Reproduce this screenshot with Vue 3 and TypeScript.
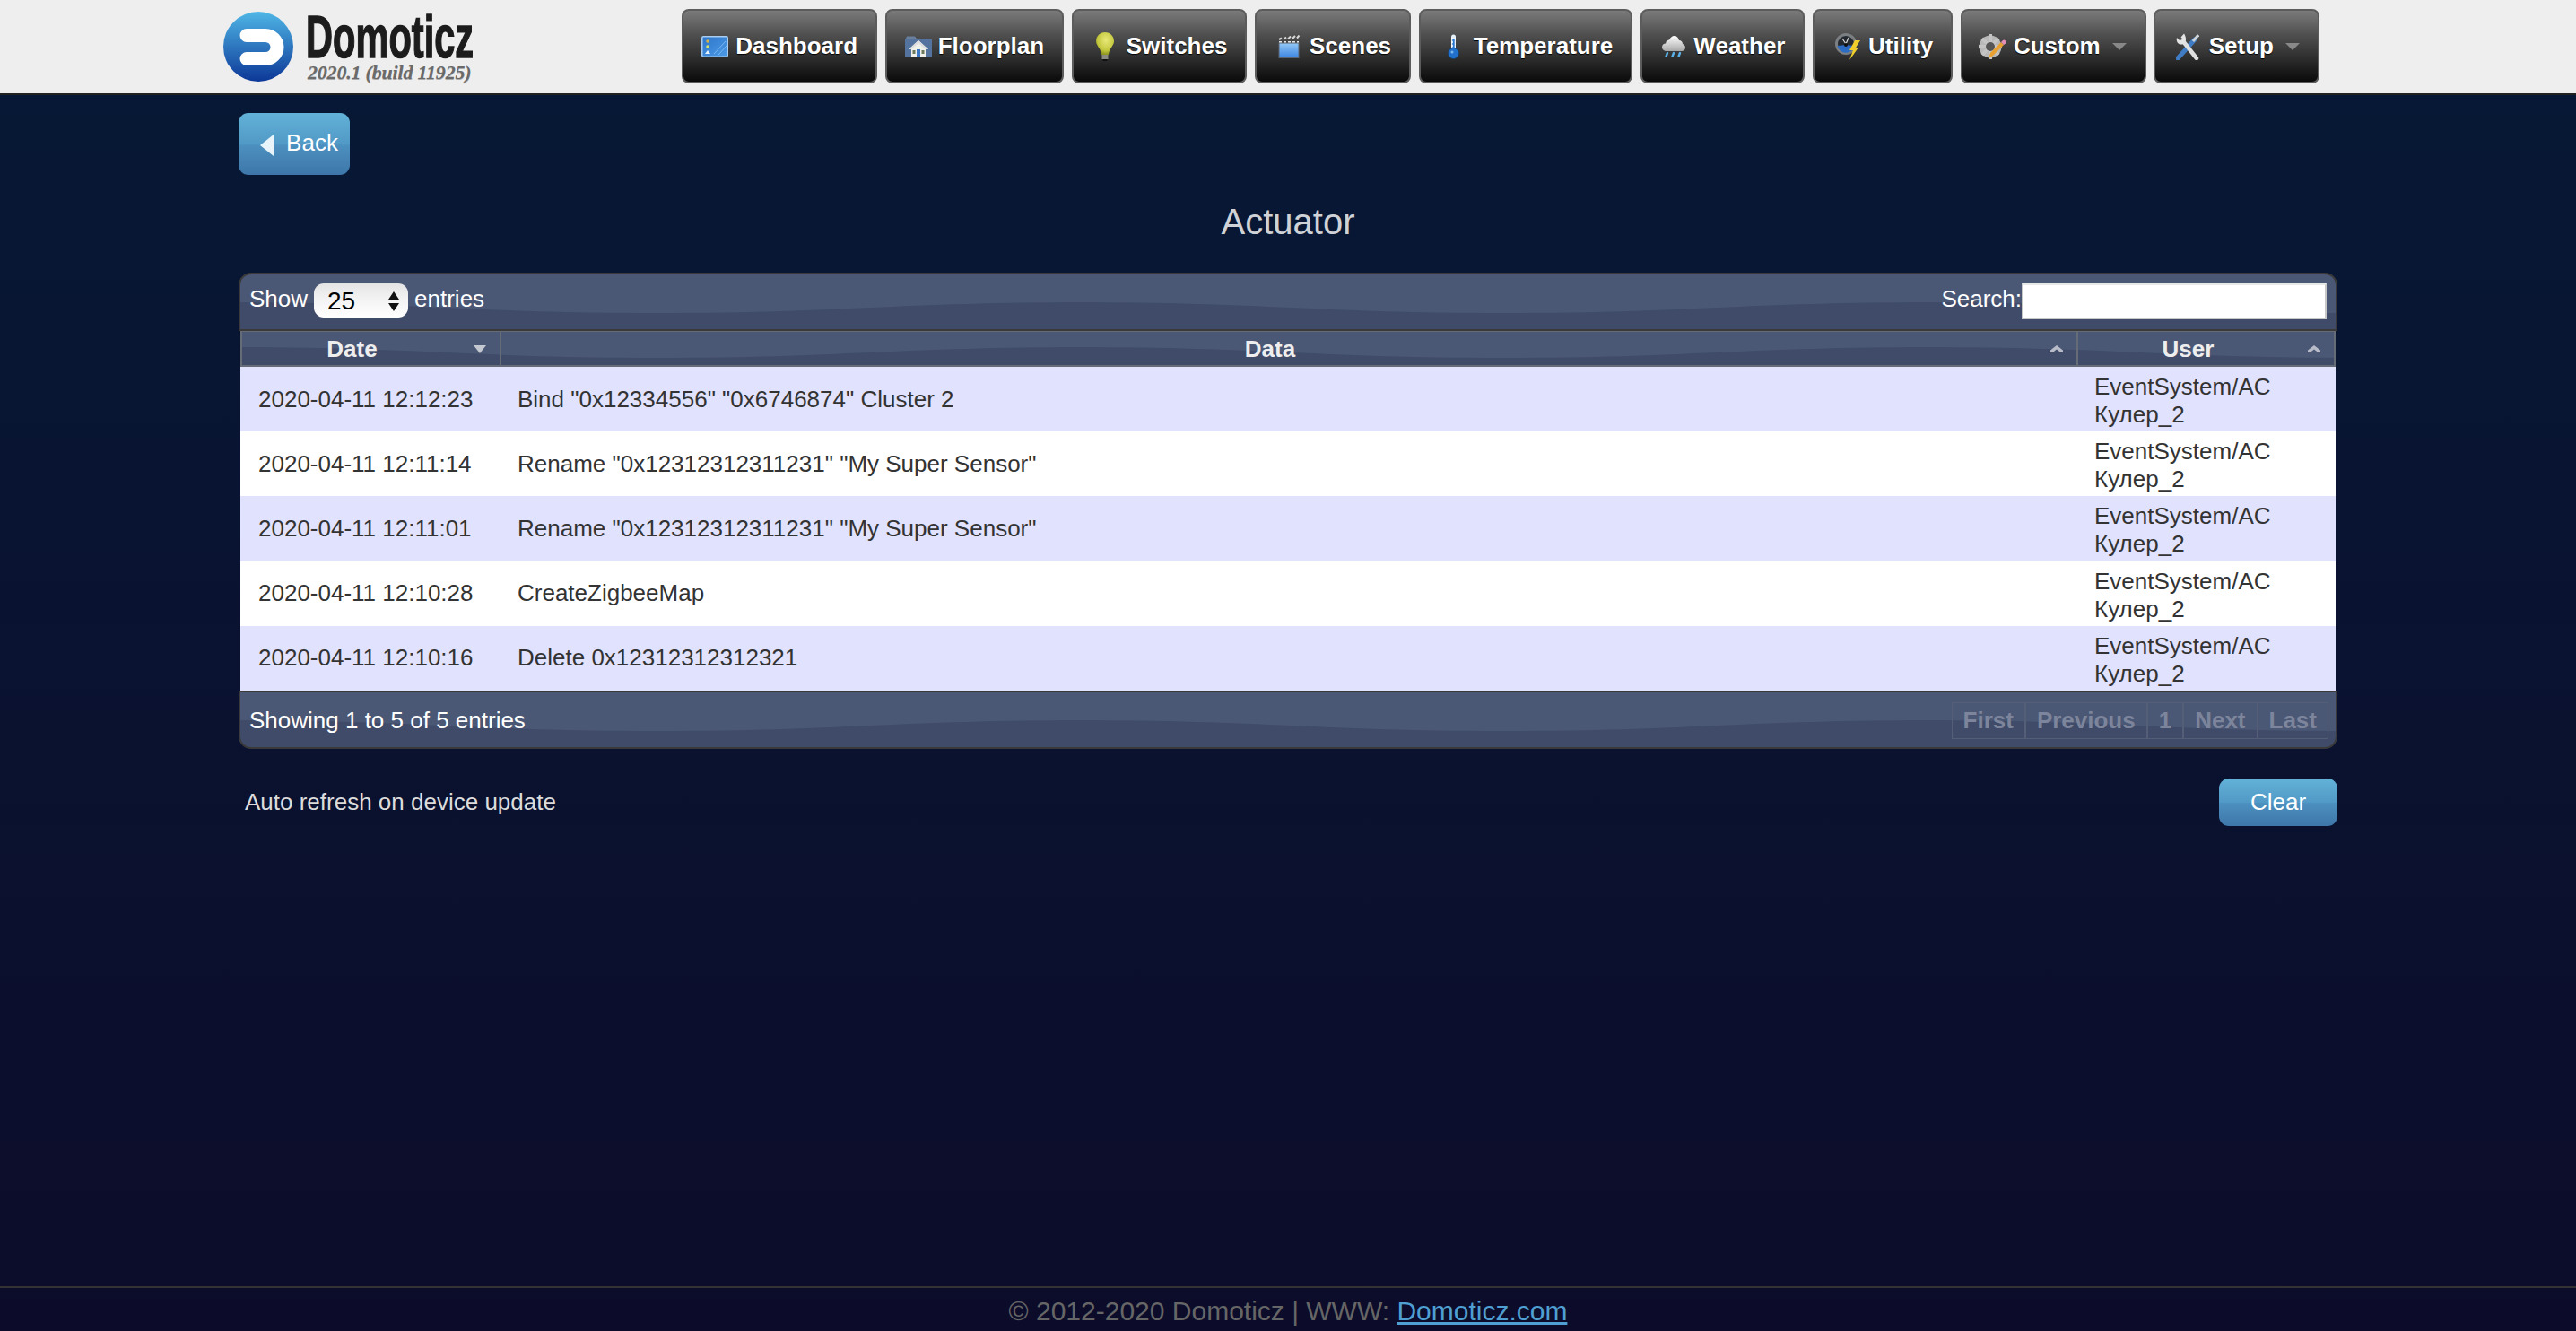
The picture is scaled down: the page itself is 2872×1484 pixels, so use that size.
<script setup lang="ts">
interface NavItem { label: string; icon: string; caret?: boolean }
interface LogRow { date: string; data: string }

const nav: NavItem[] = [
  { label: 'Dashboard', icon: 'dashboard' },
  { label: 'Floorplan', icon: 'floorplan' },
  { label: 'Switches', icon: 'switches' },
  { label: 'Scenes', icon: 'scenes' },
  { label: 'Temperature', icon: 'temperature' },
  { label: 'Weather', icon: 'weather' },
  { label: 'Utility', icon: 'utility' },
  { label: 'Custom', icon: 'custom', caret: true },
  { label: 'Setup', icon: 'setup', caret: true },
]

const rows: LogRow[] = [
  { date: '2020-04-11 12:12:23', data: 'Bind "0x12334556" "0x6746874" Cluster 2' },
  { date: '2020-04-11 12:11:14', data: 'Rename "0x12312312311231" "My Super Sensor"' },
  { date: '2020-04-11 12:11:01', data: 'Rename "0x12312312311231" "My Super Sensor"' },
  { date: '2020-04-11 12:10:28', data: 'CreateZigbeeMap' },
  { date: '2020-04-11 12:10:16', data: 'Delete 0x12312312312321' },
]

const pages = ['First', 'Previous', '1', 'Next', 'Last']
</script>

<template>
  <div class="page">
    <header class="topbar">
      <a class="brand">
        <svg class="brand-mark" width="78" height="78" viewBox="0 0 78 78">
          <defs>
            <linearGradient id="markFill" x1="0" y1="0" x2="0" y2="1">
              <stop offset="0" stop-color="#4fb6e6" />
              <stop offset="1" stop-color="#0c3797" />
            </linearGradient>
          </defs>
          <circle cx="39" cy="39" r="39" fill="url(#markFill)" />
          <path d="M26 26.5H47A13 13 0 0 1 47 52.500H26" fill="none" stroke="#fff" stroke-width="15" stroke-linecap="round" />
        </svg>
        <div class="brand-text">
          <span class="brand-name">Domoticz</span>
          <span class="brand-version">2020.1 (build 11925)</span>
        </div>
      </a>
      <nav class="nav">
        <a v-for="item in nav" :key="item.label" class="nav-btn">
          <svg v-if="item.icon === 'dashboard'" class="i-dashboard" width="30" height="24" viewBox="0 0 30 24">
            <defs>
              <linearGradient id="dashFill" x1="0" y1="0" x2="1" y2="1">
                <stop offset="0" stop-color="#2f74c8" />
                <stop offset="1" stop-color="#4b9be8" />
              </linearGradient>
            </defs>
            <rect x="0.750" y="0.750" width="28.500" height="22.500" rx="1.500" fill="url(#dashFill)" stroke="#a8cdf0" stroke-width="1.500" />
            <path d="M14 20L27 6M19 21L28 11" stroke="#7fb8ee" stroke-width="1" fill="none" />
            <circle cx="7" cy="6" r="1.800" fill="#d8b04a" />
            <circle cx="7" cy="12" r="1.800" fill="#d9e36a" />
            <path d="M4 20L7 16L10 20Z" fill="#e8f2fb" />
          </svg>
          <svg v-else-if="item.icon === 'floorplan'" class="i-floorplan" width="30" height="24" viewBox="0 0 30 24">
            <path d="M1 3L2 0.500H11L13 3H28Q30 3 30 5V24H0V5Q0 3 1 3Z" fill="#6a7f9c" />
            <rect x="0" y="4" width="30" height="20" rx="1" fill="#54749f" />
            <path d="M15 5L26 15H23V23H7V15H4Z" fill="#f0f0ea" />
            <path d="M15 5L26 15H23L15 8L7 15H4Z" fill="#ddd" />
            <rect x="13" y="15" width="4" height="8" fill="#3c78c8" />
            <rect x="8.500" y="16" width="3" height="4" fill="#6e7a5a" />
            <rect x="18.500" y="16" width="3" height="4" fill="#6e7a5a" />
          </svg>
          <svg v-else-if="item.icon === 'switches'" class="i-switches" width="20" height="32" viewBox="0 0 20 32">
            <defs>
              <radialGradient id="bulbFill" cx="0.550" cy="0.350" r="0.700">
                <stop offset="0" stop-color="#e8e878" />
                <stop offset="0.650" stop-color="#c4c83e" />
                <stop offset="1" stop-color="#7c8414" />
              </radialGradient>
            </defs>
            <path d="M10 0C16 0 20 4.500 20 10C20 15 15 17 14 25H6C5 17 0 15 0 10C0 4.500 4 0 10 0Z" fill="url(#bulbFill)" />
            <rect x="6.500" y="25" width="7" height="5" fill="#8a8a80" />
            <rect x="7.500" y="30" width="5" height="2" fill="#111" />
          </svg>
          <svg v-else-if="item.icon === 'scenes'" class="i-scenes" width="24" height="26" viewBox="0 0 24 26">
            <defs>
              <linearGradient id="sceneFill" x1="0" y1="0" x2="0" y2="1">
                <stop offset="0" stop-color="#94c8f6" />
                <stop offset="1" stop-color="#3a84e0" />
              </linearGradient>
            </defs>
            <path d="M1 5L4 3.500M6 5L9 2.500M11 4.500L14 1.500M16 4L19 1M21 3.500L23.500 0.500" stroke="#d8d8d8" stroke-width="2" fill="none" />
            <path d="M1 8H4M6 8H9M11 8H14M16 8H19M21 8H23" stroke="#e4e4e4" stroke-width="2" fill="none" />
            <rect x="1" y="9" width="22" height="16.500" fill="url(#sceneFill)" stroke="#5a6470" stroke-width="1" />
          </svg>
          <svg v-else-if="item.icon === 'temperature'" class="i-temperature" width="13" height="28" viewBox="0 0 13 28">
            <rect x="4" y="0.500" width="5" height="20" rx="2.500" fill="#e6f0fa" />
            <rect x="5.300" y="5" width="2.400" height="16" fill="#2a78d0" />
            <path d="M4 5H6M4 9H6M4 13H6M4 17H6" stroke="#fff" stroke-width="1.500" />
            <circle cx="6.500" cy="21.500" r="6" fill="#2070cc" stroke="#14406e" stroke-width="0.800" />
            <circle cx="5" cy="20" r="1.500" fill="#7fb6ee" />
          </svg>
          <svg v-else-if="item.icon === 'weather'" class="i-weather" width="26" height="24" viewBox="0 0 26 24">
            <defs>
              <linearGradient id="cloudFill" x1="0" y1="0" x2="0" y2="1">
                <stop offset="0" stop-color="#fff" />
                <stop offset="1" stop-color="#a8a8a8" />
              </linearGradient>
            </defs>
            <path d="M5 17C1.500 17 0 14.500 0 12.500C0 10 2 8.500 4 8.500C4.500 5.500 6.500 4.500 8 4.500C9.500 1.500 11.500 0 13.500 0C16.500 0 18.500 2 19 5C21.500 5 23 7 23 9C25 9.500 26 11.500 26 13C26 15.500 24 17 22 17Z" fill="url(#cloudFill)" />
            <path d="M6 19L4.500 23M13 19L11.500 23M20 19L18.500 23" stroke="#5ab0e8" stroke-width="2.400" stroke-linecap="round" />
          </svg>
          <svg v-else-if="item.icon === 'utility'" class="i-utility" width="28" height="30" viewBox="0 0 28 30">
            <circle cx="12" cy="12" r="10.500" fill="#23292f" stroke="#7b7f82" stroke-width="3" />
            <path d="M2.500 14A9.700 9.700 0 0 0 21.500 14L12 13Z" fill="#2b6cc4" />
            <path d="M12 12L8 6M12 12L15 5" stroke="#d8d8d8" stroke-width="1.200" />
            <circle cx="12" cy="13" r="2" fill="#111" />
            <path d="M22 8H28L23 16H26L16 30L20 19H16Z" fill="#f0cf2c" />
          </svg>
          <svg v-else-if="item.icon === 'custom'" class="i-custom" width="32" height="30" viewBox="0 0 32 30">
            <circle cx="14" cy="15" r="9" fill="none" stroke="#b8b8b8" stroke-width="7" />
            <path d="M14 1V29M1 15H27M4.800 5.800L23.200 24.200M23.200 5.800L4.800 24.200" stroke="#c4c4c4" stroke-width="4" />
            <circle cx="14" cy="15" r="5" fill="#555" />
            <path d="M12 28L14 22L26 10L29 13L17 25Z" fill="#e8a030" />
            <path d="M26 10L28 8Q29.500 7 31 8.500T30.500 12L29 13Z" fill="#e48fb8" />
          </svg>
          <svg v-else-if="item.icon === 'setup'" class="i-setup" width="26" height="30" viewBox="0 0 26 30">
            <path d="M2 28L21 7" stroke="#3f7cc4" stroke-width="5" stroke-linecap="round" />
            <path d="M19 9L25 2" stroke="#cfd4d8" stroke-width="3" />
            <path d="M23 28L8 9" stroke="#e0e0e0" stroke-width="4.500" stroke-linecap="round" />
            <path d="M9 0.500L5.500 4.500L8 7L4 8L1 5C0 8 1.500 12 5 12.500C8 13 11 11 11 7C11 4 10 2 9 0.500Z" fill="#e4e4e4" />
          </svg>
          <span>{{ item.label }}</span>
          <i v-if="item.caret" class="caret"></i>
        </a>
      </nav>
    </header>

    <main class="content">
      <a class="btn back"><i class="back-arrow"></i>Back</a>
      <h2 class="title">Actuator</h2>

      <section class="log">
        <div class="bar bar-top">
          <label class="length">
            Show
            <select class="length-select">
              <option>25</option>
            </select>
            entries
          </label>
          <label class="search">Search:<input class="search-input" type="text" /></label>
        </div>

        <table class="grid">
          <colgroup>
            <col class="col-date" />
            <col class="col-data" />
            <col />
          </colgroup>
          <thead>
            <tr>
              <th>Date<i class="sort sort-down"></i></th>
              <th>Data<i class="sort sort-up"></i></th>
              <th>User<i class="sort sort-up"></i></th>
            </tr>
          </thead>
          <tbody>
            <tr v-for="row in rows" :key="row.date">
              <td>{{ row.date }}</td>
              <td>{{ row.data }}</td>
              <td class="user-cell">EventSystem/AC<br />Кулер_2</td>
            </tr>
          </tbody>
        </table>

        <div class="bar bar-bottom">
          <span class="info">Showing 1 to 5 of 5 entries</span>
          <div class="pager">
            <a v-for="p in pages" :key="p" class="page-btn">{{ p }}</a>
          </div>
        </div>
      </section>

      <div class="actions">
        <span class="refresh">Auto refresh on device update</span>
        <a class="btn clear">Clear</a>
      </div>
    </main>

    <footer class="foot">
      © 2012-2020 Domoticz | WWW: <a class="foot-link">Domoticz.com</a>
    </footer>
  </div>
</template>

<style>
html, body { margin: 0; padding: 0; background: #0c0c2c; }
</style>

<style scoped>
.page {
  min-height: 100vh;
  box-sizing: border-box;
  display: flex;
  flex-direction: column;
  font-family: "Liberation Sans", Arial, sans-serif;
  font-size: 26px;
  color: #fff;
  background: linear-gradient(#061936 0%, #0a1230 55%, #0c0c2a 100%);
}

/* header */
.topbar {
  height: 106px;
  box-sizing: border-box;
  border-bottom: 2px solid #222;
  background: #eeeeee;
  display: flex;
  align-items: flex-start;
  justify-content: space-between;
  padding: 0 286px 0 249px;
}
.brand { display: flex; padding-top: 13px; }
.brand-mark { display: block; flex: none; }
.brand-text { margin-left: 14px; width: 190px; display: flex; flex-direction: column; }
.brand-name {
  display: block;
  font-size: 66px;
  line-height: 66px;
  margin-top: -5px;
  font-weight: 700;
  color: #1c1c1c;
  white-space: nowrap;
  transform: scaleX(0.63);
  transform-origin: left center;
  -webkit-text-stroke: 1.500px #1c1c1c;
}
.brand-version {
  font-family: "Liberation Serif", serif;
  font-style: italic;
  font-weight: 700;
  font-size: 22px;
  line-height: 22px;
  margin: -4px 0 0 2px;
  color: #6a6a6a;
  white-space: nowrap;
  letter-spacing: -0.200px;
  text-shadow: 0 1px 0 #aaa;
}
.nav { display: flex; gap: 8.600px; padding-top: 10px; }
.nav-btn {
  box-sizing: border-box;
  height: 83px;
  padding: 0 20px;
  display: flex;
  align-items: center;
  gap: 9px;
  border: 2px solid #5c5c5c;
  border-radius: 8px;
  background: linear-gradient(#7a7a7a 0%, #4e4e4e 35%, #2a2a2a 70%, #0a0a0a 100%);
  font-weight: 700;
  color: #fff;
  white-space: nowrap;
  text-shadow: 0 1px 1px #000;
}
.nav-btn svg { flex: none; }
.i-dashboard { margin-right: -1px; }
.i-floorplan { margin-right: -2px; }
.i-switches { margin: 0 5px 0 5px; }
.i-scenes { margin: 0 2px 0 4px; }
.i-temperature { margin: 0 7px 0 10px; }
.i-weather { margin: 0 0 0 2.500px; }
.i-utility { margin: 0 0 0 3px; }
.i-custom { margin: 0 -1px 0 -3px; }
.i-setup { margin: 0 2px 0 2.500px; }
.caret {
  width: 0;
  height: 0;
  margin-left: 4px;
  border-left: 8px solid transparent;
  border-right: 8px solid transparent;
  border-top: 8px solid #888;
}

/* content */
.content {
  box-sizing: border-box;
  width: 2340px;
  margin-left: 266px;
  padding-top: 20px;
}
.btn {
  box-sizing: border-box;
  display: flex;
  align-items: center;
  justify-content: center;
  border-radius: 11px;
  color: #fff;
  background: linear-gradient(#62b2d8 0%, #5199c6 50%, #4c90bf 52%, #3e76a9 100%);
}
.back { width: 124px; height: 69px; gap: 14px; padding-left: 11px; padding-bottom: 3px; }
.back-arrow {
  width: 0;
  height: 0;
  margin-top: 6px;
  border-top: 12px solid transparent;
  border-bottom: 12px solid transparent;
  border-right: 15px solid #e8f4fa;
}
.title {
  margin: 0;
  padding-top: 28px;
  height: 109px;
  box-sizing: border-box;
  line-height: 48px;
  text-align: center;
  font-size: 40px;
  font-weight: 400;
  color: #cfd2d6;
}

/* table panel */
.bar {
  box-sizing: border-box;
  border: 2px solid #3a3a3a;
  background-color: #4a5775;
  background-image:
    url("data:image/svg+xml,%3Csvg xmlns='http://www.w3.org/2000/svg' width='944' height='64'%3E%3Cpath d='M0 31C200 31 272 43 472 43C672 43 744 31 944 31V64H0Z' fill='%233f4b69'/%3E%3C/svg%3E");
  background-repeat: repeat-x;
  background-position: 937px 0;
  display: flex;
  justify-content: space-between;
}
.bar-top {
  height: 65px;
  padding: 10px 10px 0 10px;
  border-radius: 14px 14px 0 0;
}
.bar-bottom {
  height: 65px;
  padding: 11px 8px 0 10px;
  border-radius: 0 0 14px 14px;
}
.length { display: flex; align-items: flex-start; gap: 7px; line-height: 34px; }
.length-select {
  appearance: none;
  box-sizing: border-box;
  width: 105px;
  height: 38px;
  margin: 0;
  padding: 0 0 0 15px;
  border: 0;
  border-radius: 11px;
  font-family: inherit;
  font-size: 28px;
  color: #000;
  background:
    url("data:image/svg+xml,%3Csvg xmlns='http://www.w3.org/2000/svg' width='12' height='22'%3E%3Cpath d='M6 0L12 9H0ZM6 22L0 13H12Z' fill='%23111'/%3E%3C/svg%3E") no-repeat 83px 9px,
    linear-gradient(#e4e4e4, #f4f4f4 50%, #fff);
}
.search { display: flex; align-items: flex-start; line-height: 34px; }
.search-input {
  box-sizing: border-box;
  width: 340px;
  height: 40px;
  margin: 0;
  padding: 0;
  border: 2px solid #c8c8c8;
  border-top-color: #e8e8e8;
  background: #fff;
}

.grid {
  box-sizing: border-box;
  width: 2336px;
  margin: 0 2px;
  border-collapse: separate;
  border-spacing: 0;
  table-layout: fixed;
}
.col-date { width: 289px; }
.col-data { width: 1758px; }
.grid thead tr {
  background-color: #4a5775;
  background-image:
    url("data:image/svg+xml,%3Csvg xmlns='http://www.w3.org/2000/svg' width='944' height='64'%3E%3Cpath d='M0 18C200 18 272 30 472 30C672 30 744 18 944 18V64H0Z' fill='%233f4b69'/%3E%3C/svg%3E");
  background-repeat: repeat-x;
  background-position: 937px 0;
}
.grid th {
  position: relative;
  box-sizing: border-box;
  height: 40px;
  padding: 0 42px 0 0;
  border: solid #666b78;
  border-width: 1px 0 2px 2px;
  font-weight: 700;
  color: #eee;
  text-align: center;
  line-height: 34px;
}
.grid th:last-child { border-right: 2px solid #666b78; padding-right: 40px; }
.sort { position: absolute; right: 15px; top: 15px; }
.sort-down {
  width: 0;
  height: 0;
  border-left: 7px solid transparent;
  border-right: 7px solid transparent;
  border-top: 9px solid #c4c8d0;
}
.sort-up {
  width: 14px;
  height: 8px;
  background: #b8bcc8;
  clip-path: polygon(50% 0, 100% 70%, 100% 100%, 82% 100%, 50% 55%, 18% 100%, 0 100%, 0 70%);
}
.grid td {
  padding: 5px 20px;
  line-height: 31.100px;
  color: #333;
  background: #fff;
  vertical-align: middle;
}
.grid td.user-cell { padding-top: 7px; padding-bottom: 3px; }
.grid tbody tr:nth-child(odd) td { background: #e1e2fd; }

.info { line-height: 34px; padding-top: 3px; }
.pager { display: flex; height: 41px; border: 1px solid #555e77; box-sizing: border-box; }
.page-btn {
  padding: 0 12px;
  line-height: 38px;
  font-weight: 700;
  color: #7c859b;
  border-left: 2px solid #555e77;
}
.page-btn:first-child { border-left: 0; }

.actions {
  display: flex;
  justify-content: space-between;
  align-items: center;
  padding: 33px 0 0 7px;
}
.refresh { color: #dcdcdc; }
.clear { width: 132px; height: 53px; padding-top: 1px; }

/* footer */
.foot {
  box-sizing: border-box;
  margin-top: auto;
  height: 50px;
  padding-top: 1px;
  border-top: 2px solid #333;
  text-align: center;
  font-size: 30px;
  line-height: 50px;
  color: #666;
}
.foot-link { color: #4f9fd2; text-decoration: underline; }
</style>
